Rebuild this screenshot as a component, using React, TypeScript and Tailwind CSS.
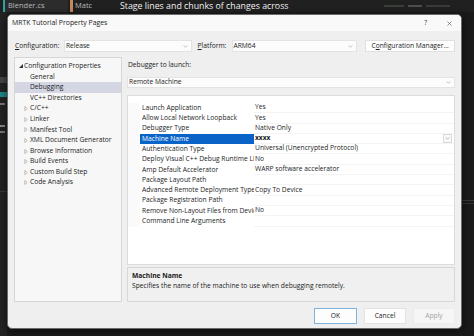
const treeItems = [
  { label: 'Configuration Properties', depth: 0, expander: 'open' },
  { label: 'General', depth: 1 },
  { label: 'Debugging', depth: 1, selected: true },
  { label: 'VC++ Directories', depth: 1 },
  { label: 'C/C++', depth: 1, expander: 'closed' },
  { label: 'Linker', depth: 1, expander: 'closed' },
  { label: 'Manifest Tool', depth: 1, expander: 'closed' },
  { label: 'XML Document Generator', depth: 1, expander: 'closed' },
  { label: 'Browse Information', depth: 1, expander: 'closed' },
  { label: 'Build Events', depth: 1, expander: 'closed' },
  { label: 'Custom Build Step', depth: 1, expander: 'closed' },
  { label: 'Code Analysis', depth: 1, expander: 'closed' },
]

const properties = [
  { name: 'Launch Application', value: 'Yes' },
  { name: 'Allow Local Network Loopback', value: 'Yes' },
  { name: 'Debugger Type', value: 'Native Only' },
  { name: 'Machine Name', value: 'xxxx', selected: true },
  { name: 'Authentication Type', value: 'Universal (Unencrypted Protocol)' },
  { name: 'Deploy Visual C++ Debug Runtime Libraries', value: 'No' },
  { name: 'Amp Default Accelerator', value: 'WARP software accelerator' },
  { name: 'Package Layout Path', value: '' },
  { name: 'Advanced Remote Deployment Type', value: 'Copy To Device' },
  { name: 'Package Registration Path', value: '' },
  { name: 'Remove Non-Layout Files from Device', value: 'No' },
  { name: 'Command Line Arguments', value: '' },
]

function Chevron({ className }: { className?: string }) {
  return (
    <svg viewBox="0 0 6 4" className={className}>
      <path d="M0.6 0.6 L3 3 L5.4 0.6" fill="none" stroke="currentColor" strokeWidth="0.7" />
    </svg>
  )
}

function Dropdown({ value, className }: { value: string; className?: string }) {
  return (
    <div
      className={`flex items-center justify-between border border-[#e3e3e3] bg-[#fcfcfc] pl-[1px] pr-[3px] ${className ?? ''}`}
    >
      <span>{value}</span>
      <Chevron className="h-[3px] w-[5px] text-[#8a8a8a]" />
    </div>
  )
}

function Expander({ kind }: { kind: string }) {
  if (kind === 'open') {
    return (
      <svg viewBox="0 0 4 4" className="h-[4px] w-[4px]">
        <path d="M4 0 L4 4 L0 4 Z" fill="#333" />
      </svg>
    )
  }
  return (
    <svg viewBox="0 0 4 6" className="h-[5px] w-[4px]">
      <path d="M0.5 0.5 L3.5 3 L0.5 5.5 Z" fill="none" stroke="#8a8a8a" strokeWidth="0.6" />
    </svg>
  )
}

export default function App() {
  return (
    <div className="relative h-[336px] w-[474px] overflow-hidden bg-[#1c1c1c] font-['Open_Sans',sans-serif] text-[6.7px] leading-none text-[#1b1b1b]">
      {/* editor behind the dialog */}
      <div className="flex h-[12px] items-stretch bg-[#202020]">
        <div className="w-[3px]" />
        <div className="w-[2px] bg-[#2fa3a3]" />
        <div className="flex w-[63px] items-center bg-[#2c2c2c] pl-[3px] text-[7.5px] text-[#b9b9b9]">Blender.cs</div>
        <div className="w-[2px]" />
        <div className="w-[3px] bg-[#c8875a]" />
        <div className="flex w-[22px] items-center pl-[2px] text-[7.5px] text-[#b9b9b9]">Matc</div>
        <div className="flex flex-1 items-center pl-[25px] text-[8.8px] text-[#f2f2f2]">
          Stage lines and chunks of changes across
        </div>
        <div className="flex w-[90px] items-center gap-[4px]">
          <div className="h-[2px] w-[20px] bg-[#3a3f3a]" />
          <div className="h-[2px] w-[14px] bg-[#4a4f4a]" />
          <div className="h-[2px] w-[24px] bg-[#3a3a3a]" />
        </div>
      </div>
      <div className="flex h-[324px]">
        <div className="flex w-[7px] flex-col bg-[#232323]">
          <div className="h-[65px]" />
          <div className="h-[6px] bg-[#454545]" />
          <div className="h-[9px]" />
          <div className="h-[5px] bg-[#1f8589]" />
          <div className="h-[6px]" />
          <div className="h-[2px] w-[5px] bg-[#777]" />
          <div className="h-[20px]" />
          <div className="h-[2px] w-[5px] bg-[#888]" />
          <div className="h-[4px]" />
          <div className="h-[2px] w-[5px] bg-[#777]" />
          <div className="h-[58px]" />
          <div className="h-[1px] bg-[#3a3a3a]" />
        </div>
        <div className="flex-1" />
        <div className="flex w-[12px] flex-col bg-[#1a1a1a]">
          <div className="h-[188px]" />
          <div className="h-[1px] bg-[#3a3a3a]" />
          <div className="h-[2px]" />
          <div className="h-[1px] bg-[#333]" />
        </div>
      </div>

      {/* property pages dialog */}
      <div className="absolute left-[7px] top-[14px] flex h-[315px] w-[455px] flex-col overflow-hidden rounded-[5px] border border-[#6b6b6b] bg-[#efefef] shadow-[0_2px_8px_rgba(0,0,0,0.6)]">
        <div className="flex h-[16px] shrink-0 items-center justify-between bg-[#f9f9f9] pl-[4px] pr-[9px] text-[6.9px]">
          <span>MRTK Tutorial Property Pages</span>
          <div className="flex items-center gap-[20px] text-[#333]">
            <span className="text-[6.5px]">?</span>
            <svg viewBox="0 0 6 6" className="h-[5px] w-[5px]">
              <path d="M0.5 0.5 L5.5 5.5 M5.5 0.5 L0.5 5.5" stroke="#333" strokeWidth="0.6" />
            </svg>
          </div>
        </div>

        <div className="flex flex-1 flex-col px-[6px] pt-[9px]">
          <div className="flex h-[12px] items-stretch">
            <span className="flex w-[50px] items-center pl-[1px]">
              <span className="underline">C</span>onfiguration:
            </span>
            <Dropdown value="Release" className="w-[128px]" />
            <span className="flex w-[40px] items-center pl-[6px]">
              <span className="underline">P</span>latform:
            </span>
            <Dropdown value="ARM64" className="w-[126px]" />
            <div className="ml-[8px] flex w-[90px] items-center justify-center border border-[#e0e0e0] bg-[#fdfdfd]">
              C<span className="underline">o</span>nfiguration Manager...
            </div>
          </div>

          <div className="mt-[5px] flex h-[245px] gap-[5px]">
            <div className="w-[108px] border border-[#d6d6d6] bg-[#f7f7f7] pt-[3px]">
              {treeItems.map((item) => (
                <div
                  key={item.label}
                  className={`flex h-[10.6px] items-center ${item.selected ? 'bg-[#d5d6e4]' : ''}`}
                >
                  <div className={`flex items-center justify-center ${item.depth === 0 ? 'ml-[3px] w-[5px]' : 'ml-[8px] w-[6px]'}`}>
                    {item.expander ? <Expander kind={item.expander} /> : null}
                  </div>
                  <span className="ml-[1px]">{item.label}</span>
                </div>
              ))}
            </div>

            <div className="flex flex-1 flex-col">
              <div className="flex h-[20px] shrink-0 items-center pb-[4px] pl-[1px]">Debugger to launch:</div>
              <Dropdown value="Remote Machine" className="h-[11px] shrink-0 pl-[1px]" />
              <div className="mt-[7px] flex h-[170px] shrink-0 flex-col border border-[#dcdcdc] bg-white pt-[7px]">
                {properties.map((prop) => (
                  <div key={prop.name} className="flex h-[10.3px] items-stretch">
                    <div className="w-[12px] bg-[#fafafa]" />
                    <div
                      className={`flex w-[114px] items-center overflow-hidden whitespace-nowrap pl-[2px] ${prop.selected ? 'bg-[#0a64c8] text-white' : ''}`}
                    >
                      {prop.name}
                    </div>
                    <div className="flex flex-1 items-center justify-between border-b border-[#f4f4f4] pl-[1px] pr-[2px]">
                      <span className={prop.selected ? 'font-bold' : ''}>{prop.value}</span>
                      {prop.selected ? (
                        <div className="flex h-[9px] w-[9px] items-center justify-center border border-[#d8d8d8] bg-[#fafafa]">
                          <Chevron className="h-[3px] w-[5px] text-[#777]" />
                        </div>
                      ) : null}
                    </div>
                  </div>
                ))}
              </div>
              <div className="mt-[2px] flex h-[35px] shrink-0 flex-col border border-[#d8d8d8] bg-[#f0f0f0] pl-[4px] pt-[5px]">
                <span className="font-bold">Machine Name</span>
                <span className="mt-[3px]">Specifies the name of the machine to use when debugging remotely.</span>
              </div>
            </div>
          </div>

          <div className="mt-[6px] flex justify-end gap-[7px]">
            <div className="flex h-[16px] w-[43px] items-center justify-center border border-[#7fb0df] bg-[#fdfdfd]">OK</div>
            <div className="flex h-[16px] w-[42px] items-center justify-center border border-[#e2e2e2] bg-[#fdfdfd]">Cancel</div>
            <div className="flex h-[16px] w-[42px] items-center justify-center border border-[#ececec] bg-[#f6f6f6] text-[#a3a3a3]">Apply</div>
          </div>
        </div>
      </div>
    </div>
  )
}
